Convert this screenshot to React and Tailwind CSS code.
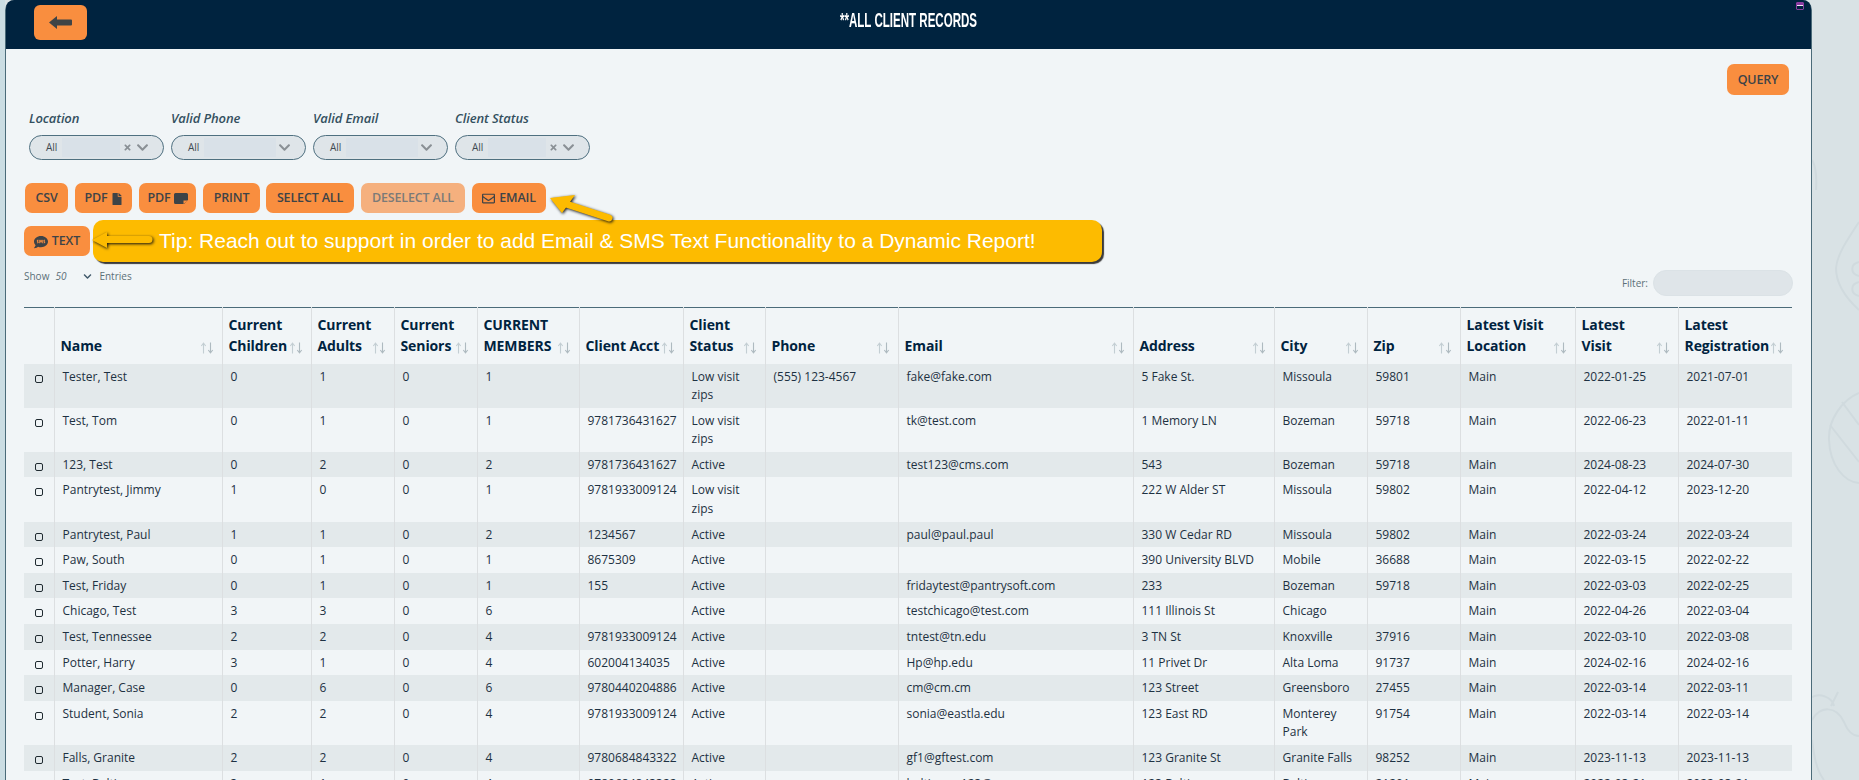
import { FaChevronDown, FaTimes, FaFile, FaRegEnvelope, FaSms } from 'react-icons/fa';

// ── Table data ──────────────────────────
const COLUMNS = [
  { key: 'check', width: 'w-[30px]', label: [] },
  { key: 'name', width: 'w-[168px]', label: ['Name'] },
  { key: 'children', width: 'w-[89px]', label: ['Current', 'Children'] },
  { key: 'adults', width: 'w-[83px]', label: ['Current', 'Adults'] },
  { key: 'seniors', width: 'w-[83px]', label: ['Current', 'Seniors'] },
  { key: 'members', width: 'w-[102px]', label: ['CURRENT', 'MEMBERS'] },
  { key: 'acct', width: 'w-[104px]', label: ['Client Acct'] },
  { key: 'status', width: 'w-[82px]', label: ['Client', 'Status'] },
  { key: 'phone', width: 'w-[133px]', label: ['Phone'] },
  { key: 'email', width: 'w-[235px]', label: ['Email'] },
  { key: 'address', width: 'w-[141px]', label: ['Address'] },
  { key: 'city', width: 'w-[93px]', label: ['City'] },
  { key: 'zip', width: 'w-[93px]', label: ['Zip'] },
  { key: 'location', width: 'w-[115px]', label: ['Latest Visit', 'Location'] },
  { key: 'visit', width: 'w-[103px]', label: ['Latest', 'Visit'] },
  { key: 'registration', width: 'w-[114px]', label: ['Latest', 'Registration'] },
];

const ROWS = [
  ['Tester, Test', '0', '1', '0', '1', '', 'Low visit zips', '(555) 123-4567', 'fake@fake.com', '5 Fake St.', 'Missoula', '59801', 'Main', '2022-01-25', '2021-07-01'],
  ['Test, Tom', '0', '1', '0', '1', '9781736431627', 'Low visit zips', '', 'tk@test.com', '1 Memory LN', 'Bozeman', '59718', 'Main', '2022-06-23', '2022-01-11'],
  ['123, Test', '0', '2', '0', '2', '9781736431627', 'Active', '', 'test123@cms.com', '543', 'Bozeman', '59718', 'Main', '2024-08-23', '2024-07-30'],
  ['Pantrytest, Jimmy', '1', '0', '0', '1', '9781933009124', 'Low visit zips', '', '', '222 W Alder ST', 'Missoula', '59802', 'Main', '2022-04-12', '2023-12-20'],
  ['Pantrytest, Paul', '1', '1', '0', '2', '1234567', 'Active', '', 'paul@paul.paul', '330 W Cedar RD', 'Missoula', '59802', 'Main', '2022-03-24', '2022-03-24'],
  ['Paw, South', '0', '1', '0', '1', '8675309', 'Active', '', '', '390 University BLVD', 'Mobile', '36688', 'Main', '2022-03-15', '2022-02-22'],
  ['Test, Friday', '0', '1', '0', '1', '155', 'Active', '', 'fridaytest@pantrysoft.com', '233', 'Bozeman', '59718', 'Main', '2022-03-03', '2022-02-25'],
  ['Chicago, Test', '3', '3', '0', '6', '', 'Active', '', 'testchicago@test.com', '111 Illinois St', 'Chicago', '', 'Main', '2022-04-26', '2022-03-04'],
  ['Test, Tennessee', '2', '2', '0', '4', '9781933009124', 'Active', '', 'tntest@tn.edu', '3 TN St', 'Knoxville', '37916', 'Main', '2022-03-10', '2022-03-08'],
  ['Potter, Harry', '3', '1', '0', '4', '602004134035', 'Active', '', 'Hp@hp.edu', '11 Privet Dr', 'Alta Loma', '91737', 'Main', '2024-02-16', '2024-02-16'],
  ['Manager, Case', '0', '6', '0', '6', '9780440204886', 'Active', '', 'cm@cm.cm', '123 Street', 'Greensboro', '27455', 'Main', '2022-03-14', '2022-03-11'],
  ['Student, Sonia', '2', '2', '0', '4', '9781933009124', 'Active', '', 'sonia@eastla.edu', '123 East RD', 'Monterey Park', '91754', 'Main', '2022-03-14', '2022-03-14'],
  ['Falls, Granite', '2', '2', '0', '4', '9780684843322', 'Active', '', 'gf1@gftest.com', '123 Granite St', 'Granite Falls', '98252', 'Main', '2023-11-13', '2023-11-13'],
  ['Test, Baltimore', '3', '1', '0', '4', '9780684843322', 'Active', '', 'baltimore123@cms.com', '123 Baltimore', 'Baltimore', '21201', 'Main', '2022-03-21', '2022-03-21'],
];

const FILTERS = [
  { label: 'Location', clear: true },
  { label: 'Valid Phone', clear: false },
  { label: 'Valid Email', clear: false },
  { label: 'Client Status', clear: true },
];

function ActionButton({ children, className = 'w-auto', muted = false }) {
  return (
    <button
      className={`flex h-[30px] items-center justify-center gap-[3px] rounded-[7px] pt-[1px] text-[12.5px] font-semibold tracking-[-0.15px] ${
        muted ? 'bg-[#f5b07e] text-[#7b7a78]' : 'bg-[#f98e3f] text-[#3d4347]'
      } ${className}`}
    >
      {children}
    </button>
  );
}

function FilterSelect({ label, clear }) {
  return (
    <div className="w-[135px]">
      <p className="text-[13px] font-semibold italic leading-[18px] tracking-[-0.1px] text-[#34505f]">{label}</p>
      <div className="mt-[8px] flex h-[25px] items-center rounded-full border border-[#4f7080] bg-[#dfe5e9] pl-[16px] pr-[14px]">
        <span className="text-[10px] text-[#3f4a52]">All</span>
        <span className={`ml-[5px] h-[19px] bg-[#d9e1e8] ${clear ? 'w-[58px]' : 'w-[72px]'}`} />
        {clear && <FaTimes className="ml-auto text-[9px] text-[#8a9095]" />}
        <FaChevronDown className={`${clear ? 'ml-[4px]' : 'ml-auto'} text-[13px] text-[#8a9095]`} />
      </div>
    </div>
  );
}

function SortArrows() {
  return (
    <svg viewBox="0 0 14 12" className="mb-[2px] h-[12px] w-[14px] shrink-0">
      <path d="M3.5 11.5V1.5M1.3 4L3.5 1.2L5.7 4" fill="none" stroke="#c3ced3" strokeWidth="1.1" />
      <path d="M10.5 0.5V10.5M8.3 8L10.5 10.8L12.7 8" fill="none" stroke="#aebac0" strokeWidth="1.1" />
    </svg>
  );
}

export default function App() {
  return (
    <div className="relative h-[780px] overflow-hidden bg-[#d9e2e5] pl-[5px] [font-family:'Open_Sans',sans-serif]">
      {/* Left edge tint */}
      <div className="absolute inset-y-0 left-0 w-[5px] bg-[#cbdde3]" />

      {/* Background doodles */}
      <svg className="absolute left-[1812px] top-0 h-[780px] w-[47px]" viewBox="0 0 47 780" fill="none" stroke="#d0dade" strokeWidth="2">
        <path d="M0 160C3 165 5 175 4 190" />
        <path d="M47 222C35 240 25 255 24 268C24 285 36 300 47 310" />
        <path d="M47 262C38 264 38 274 47 276M47 282C38 284 38 294 47 296" />
        <path d="M47 393C30 400 16 420 17 440C18 465 32 482 47 483" />
        <path d="M18 425L47 462M30 402L47 425" />
        <path d="M0 697C8 693 20 697 22 706M26 692L19 706M0 720C8 706 24 705 32 722C36 732 42 736 47 736" />
        <path d="M0 740C2 755 4 770 12 780" />
      </svg>

      {/* Panel */}
      <div className="relative h-[800px] w-[1807px] rounded-t-[10px] border-x border-[#4b6b79] bg-[#f1f5f7]">
        {/* Title bar */}
        <div className="relative flex h-[49px] items-start rounded-t-[8px] bg-[#00233f] pl-[28px] pt-[5px]">
          <button className="flex h-[35px] w-[53px] items-center justify-center rounded-[6px] bg-[#f98e3f]">
            <svg viewBox="0 0 23 13" className="h-[13px] w-[23px]">
              <path d="M0 6.5L8 0V3.5H22a1 1 0 0 1 1 1V8.5a1 1 0 0 1-1 1H8V13z" fill="#3f4446" />
            </svg>
          </button>
          <h1 className="absolute inset-x-0 top-[7px] scale-x-[0.55] text-center [font-family:'Liberation_Sans',sans-serif] text-[21px] font-bold leading-[26px] text-white">
            **ALL CLIENT RECORDS
          </h1>
          <svg viewBox="0 0 8 8" className="absolute right-[7px] top-[2px] h-[8px] w-[8px]">
            <rect x="0.5" y="0.5" width="7" height="7" rx="1" fill="#f1e6f5" stroke="#8a3aa0" />
            <rect x="0.5" y="0.5" width="7" height="2.5" fill="#8a3aa0" />
            <rect x="1" y="4" width="6" height="3" fill="#00233f" />
          </svg>
        </div>

        {/* Query */}
        <div className="flex justify-end pr-[22px] pt-[15px]">
          <ActionButton className="h-[31px] w-[62px]">QUERY</ActionButton>
        </div>

        {/* Filters */}
        <div className="flex gap-[7px] pl-[23px] pt-[14px]">
          {FILTERS.map((f) => (
            <FilterSelect key={f.label} label={f.label} clear={f.clear} />
          ))}
        </div>

        {/* Action buttons */}
        <div className="flex gap-[7px] pl-[19px] pt-[23px]">
          <ActionButton className="w-[43px]">CSV</ActionButton>
          <ActionButton className="w-[57px]">
            PDF <FaFile className="text-[12px]" />
          </ActionButton>
          <ActionButton className="w-[57px]">
            PDF
            <svg viewBox="0 0 14 11" className="h-[11px] w-[14px]">
              <path d="M1.5 0h11A1.5 1.5 0 0 1 14 1.5V7l-4 4H1.5A1.5 1.5 0 0 1 0 9.5v-8A1.5 1.5 0 0 1 1.5 0z" fill="#3d4347" />
              <path d="M9.5 7.5H14L9.5 11z" fill="#f98e3f" />
            </svg>
          </ActionButton>
          <ActionButton className="w-[57px]">PRINT</ActionButton>
          <ActionButton className="ml-[-1px] w-[88px]">SELECT ALL</ActionButton>
          <ActionButton className="w-[104px]" muted>DESELECT ALL</ActionButton>
          <ActionButton className="w-[74px]">
            <FaRegEnvelope className="mr-[1px] text-[13px]" /> EMAIL
          </ActionButton>
        </div>

        {/* Text + tip */}
        <div className="flex items-center pl-[18px] pt-[7px]">
          <ActionButton className="w-[66px]">
            <FaSms className="mr-[1px] text-[14px]" /> TEXT
          </ActionButton>
          <div className="ml-[3px] flex h-[42px] w-[1009px] items-center rounded-[10px] bg-[#fdbb00] pl-[66px] [font-family:'Liberation_Sans',sans-serif] text-[21px] text-white shadow-[2px_2px_1px_#3a3a3a]">
            Tip: Reach out to support in order to add Email &amp; SMS Text Functionality to a Dynamic Report!
          </div>
        </div>

        {/* Tip arrows */}
        <svg className="absolute left-[0px] top-0 h-[270px] w-[700px] drop-shadow-[1px_1px_1.5px_#111]" viewBox="0 0 700 270" fill="#fdbb00">
          <path d="M603 218L560 204" stroke="#fdbb00" strokeWidth="7" strokeLinecap="round" />
          <path d="M544 198L569 195L556 213z" />
          <path d="M143 239.5H100" stroke="#fdbb00" strokeWidth="7" strokeLinecap="round" />
          <path d="M86 240L101 232V248z" />
        </svg>

        {/* Show / Filter */}
        <div className="mt-[8px] flex h-[26px] items-center justify-between pl-[18px] pr-[18px] text-[10px] text-[#5c7078]">
          <div className="flex items-center pb-[13px]">
            <span>Show</span>
            <span className="ml-[6px] italic">50</span>
            <FaChevronDown className="ml-[17px] text-[9px] text-[#40596a]" />
            <span className="ml-[7px]">Entries</span>
          </div>
          <div className="flex items-center">
            <span>Filter:</span>
            <span className="ml-[5px] h-[26px] w-[140px] rounded-full border border-[#dbe2e6] bg-[#dfe5e9]" />
          </div>
        </div>

        {/* Table */}
        <div className="mt-[11px] pl-[18px]">
          <table className="w-[1768px] table-fixed border-collapse border-t border-[#4b6b79] text-[#1d3142]">
            <colgroup>
              {COLUMNS.map((c) => (
                <col key={c.key} className={c.width} />
              ))}
            </colgroup>
            <thead>
              <tr className="h-[56px]">
                {COLUMNS.map((c, i) => (
                  <th
                    key={c.key}
                    className={`pb-[8px] pl-[6px] pr-[8px] align-bottom text-left text-[14px] font-bold leading-[21px] tracking-[-0.1px] text-[#00233f] ${
                      i < COLUMNS.length - 1 ? 'border-r border-[#dcdfe1]' : ''
                    }`}
                  >
                    {c.label.length > 0 && (
                      <div className="flex items-end justify-between">
                        <span className="whitespace-nowrap">
                          {c.label.map((line) => (
                            <span key={line} className="block">{line}</span>
                          ))}
                        </span>
                        <SortArrows />
                      </div>
                    )}
                  </th>
                ))}
              </tr>
            </thead>
            <tbody>
              {ROWS.map((row, r) => (
                <tr key={row[0]} className={r % 2 === 0 ? 'bg-[#e3e9eb]' : 'bg-[#f1f5f7]'}>
                  <td className="border-r border-[#dcdfe1] pl-[11px] align-top pt-[11px]">
                    <span className="block h-[8px] w-[8px] rounded-[2px] border-[1.5px] border-[#1f2a30]" />
                  </td>
                  {row.map((value, i) => (
                    <td
                      key={i}
                      className={`px-[8px] pb-[3px] pt-[4px] align-top text-[12px] leading-[18.6px] ${
                        i < row.length - 1 ? 'border-r border-[#dcdfe1]' : ''
                      }`}
                    >
                      {value}
                    </td>
                  ))}
                </tr>
              ))}
            </tbody>
          </table>
        </div>
      </div>
    </div>
  );
}
